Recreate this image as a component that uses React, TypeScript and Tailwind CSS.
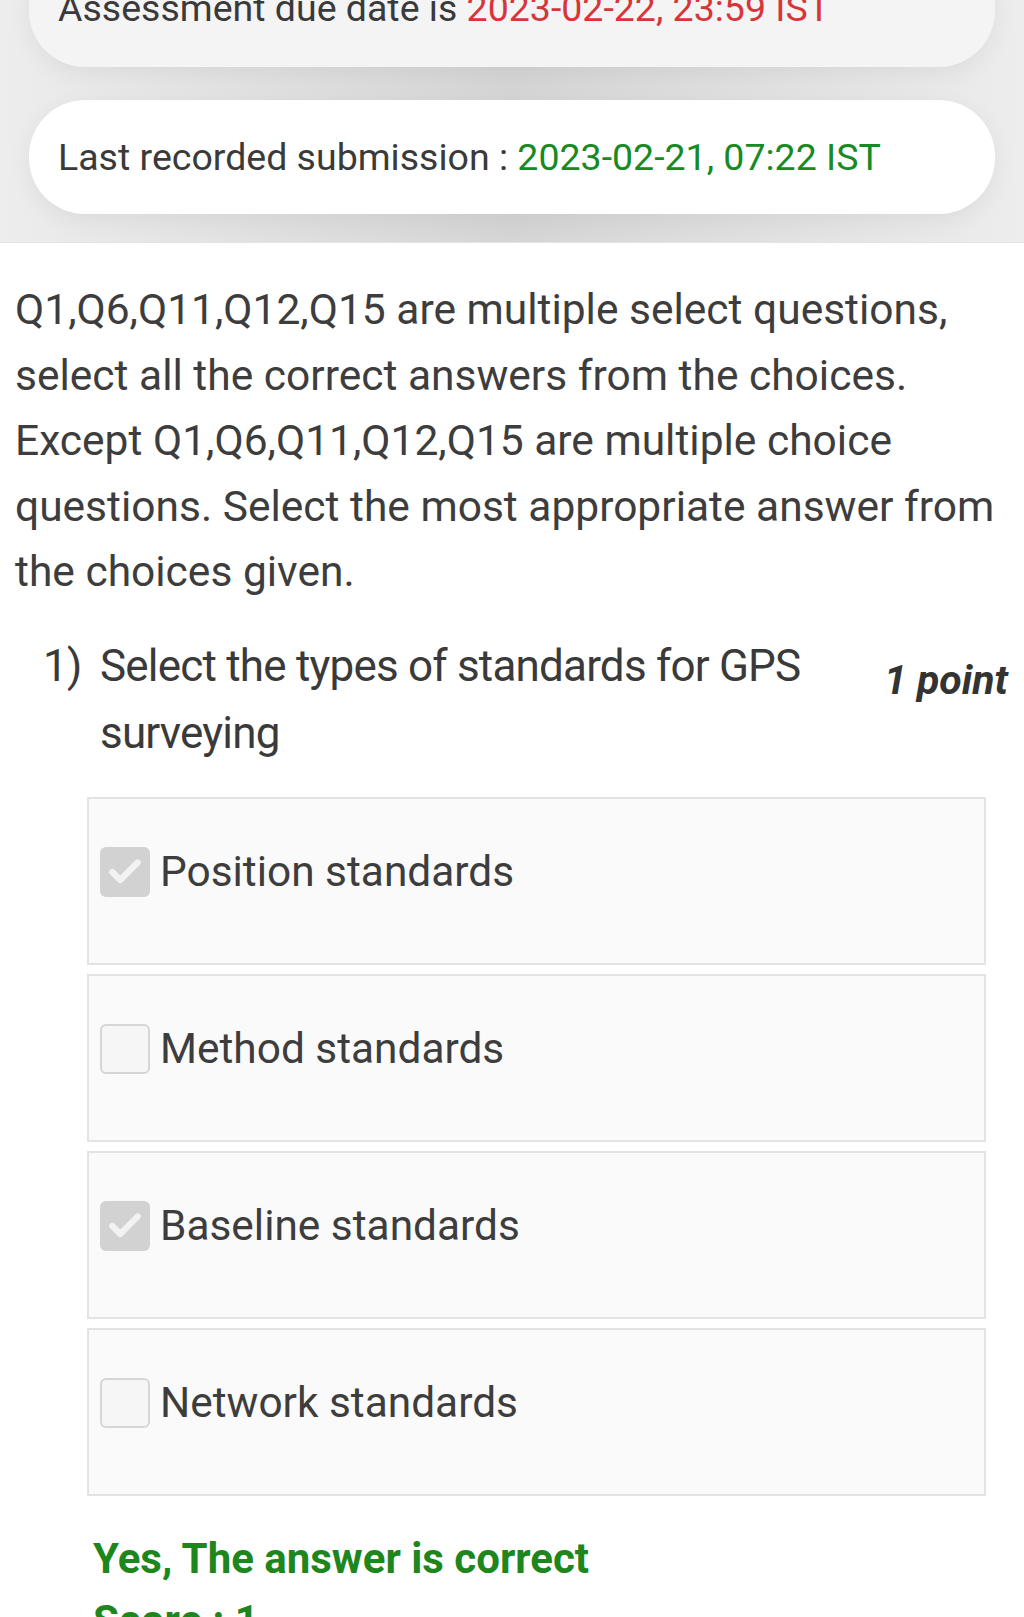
import { Check } from "lucide-react";

const options = [
  { label: "Position standards", checked: true },
  { label: "Method standards", checked: false },
  { label: "Baseline standards", checked: true },
  { label: "Network standards", checked: false },
];

export default function App() {
  return (
    <div className="w-[1024px] h-[1617px] overflow-hidden bg-white font-[family-name:Roboto,sans-serif]">
      {/* Status band */}
      <div className="flex flex-col gap-[33px] px-[29px] pb-[28px] border-b border-[#e4e4e4] bg-linear-to-r from-[#ededed] via-[#d5d5d5] to-[#ededed]">
        <div className="-mt-[49px] rounded-[56px] bg-[#f4f4f4] px-[29px] pt-[35px] pb-[37px] text-[37.5px] leading-[44px] text-[#3a3a3a] shadow-[0_6px_24px_rgba(0,0,0,0.06)]">
          Assessment due date is <span className="text-[#d8353b]">2023-02-22, 23:59 IST</span>
        </div>
        <div className="rounded-[56px] bg-white px-[29px] py-[35px] text-[37.5px] leading-[44px] text-[#3a3a3a] shadow-[0_6px_24px_rgba(0,0,0,0.06)]">
          Last recorded submission : <span className="text-[#178a24]">2023-02-21, 07:22 IST</span>
        </div>
      </div>

      {/* Instructions */}
      <p className="pl-[15px] pr-[8px] pt-[34px] text-[42.5px] leading-[65.5px] text-[#3d3d3d]">
        Q1,Q6,Q11,Q12,Q15 are multiple select questions, select all the correct answers from the
        choices. Except Q1,Q6,Q11,Q12,Q15 are multiple choice questions. Select the most appropriate
        answer from the choices given.
      </p>

      {/* Question */}
      <div className="mt-[28px] flex text-[#3a3a3a]">
        <div className="w-[100px] pl-[43px] text-[44px] leading-[67px] tracking-[-0.8px]">1)</div>
        <div className="w-[770px] text-[44px] leading-[67px] tracking-[-0.8px]">
          Select the types of standards for GPS surveying
        </div>
        <div className="mt-[14px] flex-1 text-right pr-[16px] text-[41px] leading-[67px] font-bold italic text-[#333]">
          1 point
        </div>
      </div>

      {/* Options */}
      <div className="mt-[30px] ml-[87px] w-[899px] flex flex-col gap-[9px]">
        {options.map((o) => (
          <div
            key={o.label}
            className="h-[168px] border-2 border-[#e3e3e3] bg-[#fafafa] pl-[11px] pt-[48px]"
          >
            <div className="flex items-center gap-[10px]">
              {o.checked ? (
                <div className="w-[50px] h-[50px] rounded-[6px] bg-[#d2d2d2] flex items-center justify-center">
                  <Check size={38} strokeWidth={4} className="text-[#f2f2f2]" />
                </div>
              ) : (
                <div className="w-[50px] h-[50px] rounded-[6px] border-2 border-[#d6d6d6] bg-[#f6f6f6]" />
              )}
              <span className="text-[42.4px] leading-[50px] text-[#3d3d3d]">{o.label}</span>
            </div>
          </div>
        ))}
      </div>

      {/* Result */}
      <div className="mt-[32px] pl-[93px] text-[42px] leading-[62px] font-bold text-[#1d861d]">
        <p>Yes, The answer is correct</p>
        <p>Score : 1</p>
      </div>
    </div>
  );
}
